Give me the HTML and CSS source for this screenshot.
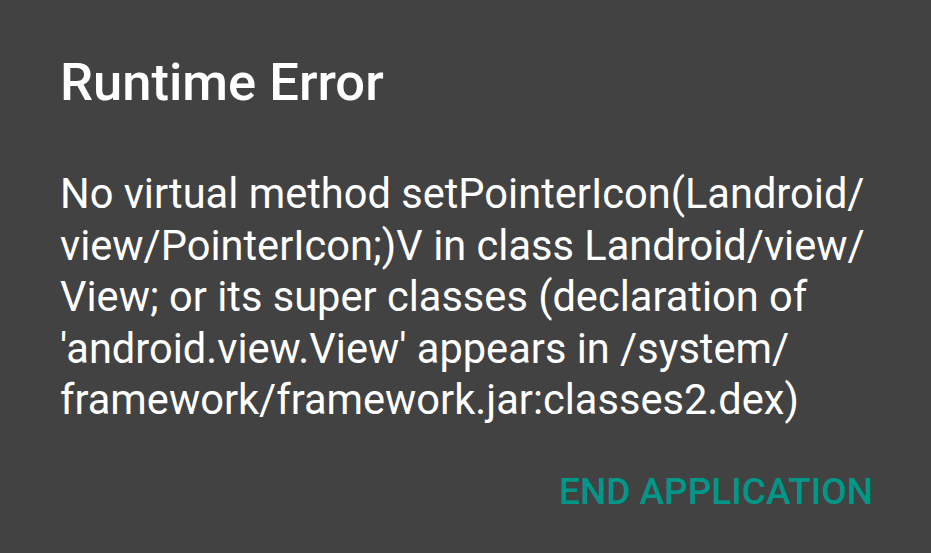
FILE: index.html
```html
<!DOCTYPE html>
<html>
<head>
<meta charset="utf-8">
<link rel="stylesheet" href="styles.css">
</head>
<body>
<div class="dialog">
  <h1 class="title">Runtime Error</h1>
  <p class="message">No virtual method setPointerIcon(Landroid/<br>view/PointerIcon;)V in class Landroid/view/<br>View; or its super classes (declaration of<br>'android.view.View' appears in /system/<br>framework/framework.jar:classes2.dex)</p>
  <div class="actions">
    <span class="button">END APPLICATION</span>
  </div>
</div>
</body>
</html>
```
FILE: styles.css
```css
html, body {
  margin: 0;
  padding: 0;
  background: #424242;
  width: 931px;
  height: 553px;
  overflow: hidden;
}
.dialog {
  font-family: Roboto, "Noto Sans", sans-serif;
  color: #ffffff;
  padding: 52px 58px 0 60px;
}
.title {
  margin: 0;
  font-size: 52.5px;
  font-weight: 500;
  line-height: 60px;
}
.message {
  margin: 56px 0 0 0;
  font-size: 41.6px;
  font-weight: 400;
  line-height: 51.5px;
  white-space: nowrap;
}
.actions {
  display: flex;
  justify-content: flex-end;
  margin-top: 44px;
}
.button {
  color: #009688;
  font-size: 37px;
  font-weight: 500;
  line-height: 44px;
}
```
